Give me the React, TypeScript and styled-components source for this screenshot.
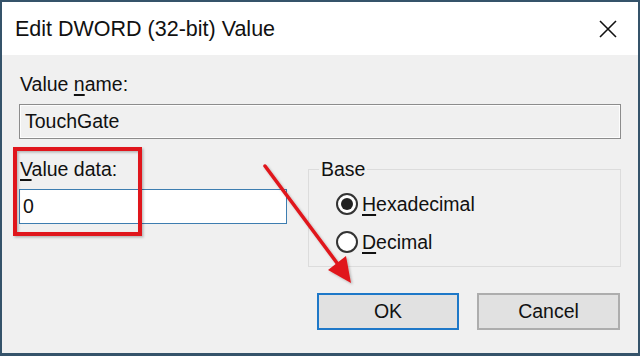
import React from 'react'
import styled, { createGlobalStyle } from 'styled-components'

const GlobalStyle = createGlobalStyle`
  html, body {
    margin: 0;
    padding: 0;
    background: #ffffff;
  }
  body {
    font-family: 'Liberation Sans', Arial, sans-serif;
    color: #111;
  }
`

export default function App() {
  return (
    <>
      <GlobalStyle />
      <Window>
        <TitleBar>
          <Title>Edit DWORD (32-bit) Value</Title>
          <CloseButton aria-label="Close">
            <svg width="18" height="18" viewBox="0 0 18 18">
              <path d="M1 1 L17 17 M17 1 L1 17" stroke="#111" strokeWidth="1.6" fill="none" />
            </svg>
          </CloseButton>
        </TitleBar>

        <Body>
          <Label>
            Value <u>n</u>ame:
          </Label>
          <ReadOnlyField>TouchGate</ReadOnlyField>

          <DataRow>
            <DataColumn>
              <Label>
                <u>V</u>alue data:
              </Label>
              <DataInput>0</DataInput>
            </DataColumn>

            <GroupBox>
              <Legend>Base</Legend>
              <RadioList>
                <RadioRow>
                  <RadioCircle $checked />
                  <RadioText>
                    <u>H</u>exadecimal
                  </RadioText>
                </RadioRow>
                <RadioRow>
                  <RadioCircle />
                  <RadioText>
                    <u>D</u>ecimal
                  </RadioText>
                </RadioRow>
              </RadioList>
            </GroupBox>
          </DataRow>

          <ButtonRow>
            <DialogButton $primary>OK</DialogButton>
            <DialogButton>Cancel</DialogButton>
          </ButtonRow>
        </Body>

        {/* red annotation drawn over the dialog */}
        <Annotations width="640" height="356" viewBox="0 0 640 356">
          <defs>
            <filter id="shadow" x="-10%" y="-10%" width="130%" height="130%">
              <feDropShadow dx="1.5" dy="1.5" stdDeviation="1.2" floodColor="#000" floodOpacity="0.25" />
            </filter>
          </defs>
          <rect x="15" y="149" width="125" height="85" fill="none" stroke="#e0161b" strokeWidth="4" filter="url(#shadow)" />
          <g filter="url(#shadow)">
            <line x1="265" y1="166" x2="340" y2="267" stroke="#e0161b" strokeWidth="3.5" strokeLinecap="round" />
            <polygon points="351,283 328,270 346,256" fill="#e0161b" />
          </g>
        </Annotations>
      </Window>
    </>
  )
}

const Window = styled.div`
  position: relative;
  box-sizing: border-box;
  width: 640px;
  height: 356px;
  border: 2px solid #35536a;
  border-bottom-width: 3px;
  background: #f0f0f0;
  display: flex;
  flex-direction: column;
  overflow: hidden;
`

const TitleBar = styled.div`
  height: 53px;
  flex-shrink: 0;
  background: #ffffff;
  display: flex;
  align-items: center;
  justify-content: space-between;
  padding: 0 21px 0 13px;
`

const Title = styled.div`
  font-size: 21.5px;
  line-height: 26px;
  color: #111;
`

const CloseButton = styled.div`
  width: 18px;
  height: 18px;
  display: flex;
  margin-top: 1px;
`

const Body = styled.div`
  flex: 1;
  display: flex;
  flex-direction: column;
  padding: 18px 17px 0 17px;
`

const Label = styled.div`
  font-size: 19.5px;
  line-height: 22px;
  padding-left: 1px;
  color: #111;

  u {
    text-decoration-thickness: 1.5px;
    text-underline-offset: 3px;
  }
`

const ReadOnlyField = styled.div`
  box-sizing: border-box;
  height: 35px;
  margin-top: 9px;
  border: 1px solid #8c8c8c;
  box-shadow: inset 0 0 0 1px #fdfdfd;
  background: #f0f0f0;
  font-size: 19.5px;
  line-height: 33px;
  padding-left: 5px;
  color: #111;
`

const DataRow = styled.div`
  display: flex;
  align-items: flex-start;
  gap: 21px;
  margin-top: 19px;
`

const DataColumn = styled.div`
  width: 268px;
  display: flex;
  flex-direction: column;
`

const DataInput = styled.div`
  box-sizing: border-box;
  height: 35px;
  margin-top: 9px;
  border: 1px solid #3d7db0;
  background: #ffffff;
  font-size: 19.5px;
  line-height: 33px;
  padding-left: 3px;
  color: #111;
`

const GroupBox = styled.fieldset`
  flex: 1;
  min-width: 0;
  margin: 0;
  padding: 0 0 13px 10px;
  border: 1px solid #dcdcdc;
`

const Legend = styled.legend`
  padding: 0 2px;
  font-size: 19.5px;
  line-height: 22px;
  color: #111;
`

const RadioList = styled.div`
  display: flex;
  flex-direction: column;
  gap: 16px;
  padding: 13px 0 0 17px;
`

const RadioRow = styled.div`
  display: flex;
  align-items: center;
  gap: 4px;
  height: 22px;
`

const RadioCircle = styled.span<{ $checked?: boolean }>`
  box-sizing: border-box;
  width: 22px;
  height: 22px;
  border-radius: 50%;
  border: 2px solid #333;
  background: #fff;
  display: flex;
  align-items: center;
  justify-content: center;

  &::after {
    content: '';
    width: 12px;
    height: 12px;
    border-radius: 50%;
    background: #222;
    display: ${({ $checked }) => ($checked ? 'block' : 'none')};
  }
`

const RadioText = styled.span`
  font-size: 19.5px;
  line-height: 22px;
  color: #111;

  u {
    text-decoration-thickness: 1.5px;
    text-underline-offset: 3px;
  }
`

const ButtonRow = styled.div`
  display: flex;
  justify-content: flex-end;
  gap: 18px;
  margin-top: 26px;
  padding-right: 1px;
`

const DialogButton = styled.div<{ $primary?: boolean }>`
  box-sizing: border-box;
  width: ${({ $primary }) => ($primary ? '142px' : '143px')};
  height: 37px;
  display: flex;
  align-items: center;
  justify-content: center;
  background: #e1e1e1;
  border: 2px solid ${({ $primary }) => ($primary ? '#1e78c8' : '#adadad')};
  font-size: 19.5px;
  color: #111;
`

const Annotations = styled.svg`
  position: absolute;
  left: -2px;
  top: -2px;
  pointer-events: none;
`
